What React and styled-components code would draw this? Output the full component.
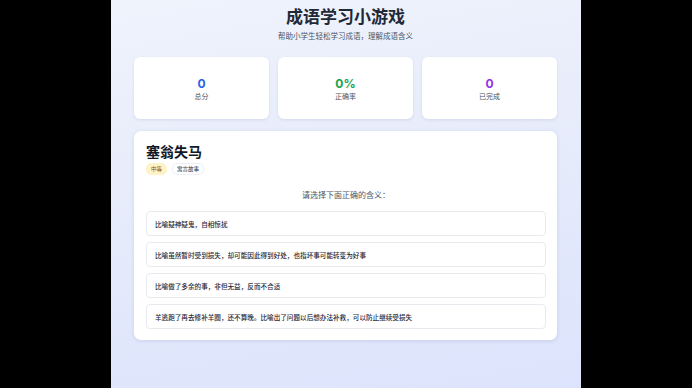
import styled, { createGlobalStyle } from "styled-components";

const GlobalStyle = createGlobalStyle`
  html, body {
    margin: 0;
    padding: 0;
    background: #000;
    height: 100%;
  }
  #root {
    height: 100%;
  }
  * {
    box-sizing: border-box;
  }
`;

const stats = [
  { id: 1, value: "0", label: "总分", color: "#2563eb" },
  { id: 2, value: "0%", label: "正确率", color: "#16a34a" },
  { id: 3, value: "0", label: "已完成", color: "#9333ea" },
];

const options = [
  { id: 1, text: "比喻疑神疑鬼，自相惊扰" },
  { id: 2, text: "比喻虽然暂时受到损失，却可能因此得到好处，也指坏事可能转变为好事" },
  { id: 3, text: "比喻做了多余的事，非但无益，反而不合适" },
  { id: 4, text: "羊逃跑了再去修补羊圈，还不算晚。比喻出了问题以后想办法补救，可以防止继续受损失" },
];

export default function App() {
  return (
    <>
      <GlobalStyle />
      <Page>
        <Column>
          <Header>
            <Title>成语学习小游戏</Title>
            <Subtitle>帮助小学生轻松学习成语，理解成语含义</Subtitle>
          </Header>
          <StatsRow>
            {stats.map((s) => (
              <StatCard key={s.id}>
                <StatValue color={s.color}>{s.value}</StatValue>
                <StatLabel>{s.label}</StatLabel>
              </StatCard>
            ))}
          </StatsRow>
          <QuizCard>
            <Idiom>塞翁失马</Idiom>
            <Tags>
              <Tag $variant="level">中等</Tag>
              <Tag>寓言故事</Tag>
            </Tags>
            <Prompt>请选择下面正确的含义：</Prompt>
            <OptionList>
              {options.map((o) => (
                <Option key={o.id}>{o.text}</Option>
              ))}
            </OptionList>
          </QuizCard>
        </Column>
      </Page>
    </>
  );
}

const Page = styled.div`
  display: flex;
  justify-content: center;
  height: 100%;
  min-height: 388px;
  font-family: "Noto Sans CJK SC", "Noto Sans", Inter, sans-serif;
`;

const Column = styled.div`
  width: 470px;
  height: 388px;
  background: linear-gradient(170deg, #eff3fc 0%, #e6ebfb 50%, #dce3fc 100%);
  padding: 5px 24px 0 23px;
  display: flex;
  flex-direction: column;
`;

const Header = styled.div`
  display: flex;
  flex-direction: column;
  align-items: center;
`;

const Title = styled.h1`
  margin: 0;
  font-size: 17px;
  line-height: 22px;
  font-weight: 700;
  color: #1f2937;
`;

const Subtitle = styled.p`
  margin: 3px 0 0;
  font-size: 7.5px;
  line-height: 11px;
  color: #4b5563;
`;

const StatsRow = styled.div`
  display: grid;
  grid-template-columns: repeat(3, 1fr);
  gap: 9px;
  margin-top: 16px;
`;

const StatCard = styled.div`
  height: 62px;
  background: #fff;
  border-radius: 6px;
  box-shadow: 0 1px 3px rgba(60, 70, 120, 0.12);
  display: flex;
  flex-direction: column;
  align-items: center;
  justify-content: center;
  padding-top: 2px;
`;

const StatValue = styled.div`
  font-family: Inter, "Noto Sans", sans-serif;
  font-size: 12px;
  line-height: 14px;
  font-weight: 700;
  color: ${(p) => p.color};
`;

const StatLabel = styled.div`
  font-size: 7px;
  line-height: 11px;
  color: #4b5563;
`;

const QuizCard = styled.div`
  margin-top: 12px;
  background: #fff;
  border-radius: 7px;
  box-shadow: 0 1px 4px rgba(60, 70, 120, 0.14);
  padding: 11px 11px 11px 12px;
  display: flex;
  flex-direction: column;
`;

const Idiom = styled.h2`
  margin: 0;
  font-size: 14px;
  line-height: 18px;
  font-weight: 700;
  color: #111827;
`;

const Tags = styled.div`
  display: flex;
  gap: 5px;
  margin-top: 3px;
`;

const Tag = styled.span`
  font-size: 5.5px;
  line-height: 10px;
  padding: 0 4px;
  border-radius: 5px;
  color: ${(p) => (p.$variant === "level" ? "#854d0e" : "#1f2937")};
  background: ${(p) => (p.$variant === "level" ? "#fef3c7" : "#fff")};
  border: 1px solid ${(p) => (p.$variant === "level" ? "#fef3c7" : "#eceef3")};
`;

const Prompt = styled.p`
  margin: 14px 0 0;
  text-align: center;
  font-size: 8px;
  line-height: 12px;
  color: #4b5563;
`;

const OptionList = styled.div`
  display: flex;
  flex-direction: column;
  gap: 6px;
  margin-top: 10px;
`;

const Option = styled.div`
  height: 25px;
  display: flex;
  align-items: center;
  padding: 0 8px;
  border: 1px solid #e8eaf0;
  border-radius: 4px;
  background: #fff;
  font-size: 6.6px;
  font-weight: 500;
  color: #1f2937;
`;
